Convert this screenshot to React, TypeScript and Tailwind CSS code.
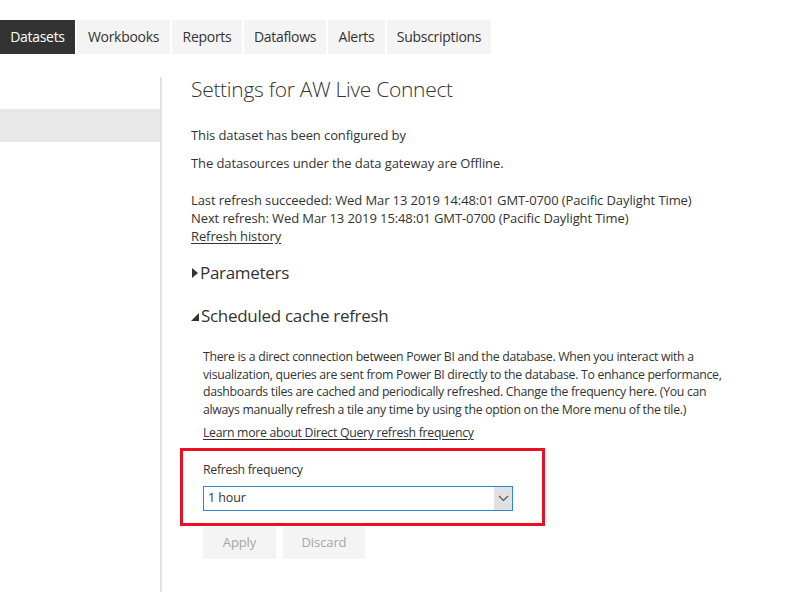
const tabs = [
  { label: 'Datasets', w: 'w-[75px]' },
  { label: 'Workbooks', w: 'w-[93px]' },
  { label: 'Reports', w: 'w-[70px]' },
  { label: 'Dataflows', w: 'w-[82px]' },
  { label: 'Alerts', w: 'w-[57px]' },
  { label: 'Subscriptions', w: 'w-[104px]' },
];

export default function App() {
  return (
    <div className="h-[605px] w-[793px] overflow-hidden bg-white font-['Open_Sans',sans-serif] text-[#333]">
      {/* Tabs */}
      <div className="mt-[20px] flex h-[34px] gap-[2px]">
        {tabs.map((t, i) => (
          <div
            key={t.label}
            className={
              (i === 0 ? 'bg-[#333] text-white ' : 'bg-[#f4f4f4] text-[#333] ') +
              t.w +
              ' flex items-center justify-center pb-[1px] text-[14px] tracking-[-0.3px]'
            }
          >
            {t.label}
          </div>
        ))}
      </div>

      <div className="mt-[23px] flex">
        {/* Sidebar */}
        <div className="h-[515px] w-[162px] border-r-2 border-[#e1e1e1] pt-[32px]">
          <div className="h-[33px] bg-[#e8e8e8]" />
        </div>

        {/* Main */}
        <div className="pl-[29px] text-[13px] tracking-[-0.1px]">
          <h1 className="mt-[-3px] text-[21px] font-light leading-[30px] tracking-[-0.3px] text-[#333]">
            Settings for AW Live Connect
          </h1>
          <p className="mt-[22px] leading-[18px]">This dataset has been configured by</p>
          <p className="mt-[10px] leading-[18px]">The datasources under the data gateway are Offline.</p>
          <div className="mt-[19px] leading-[18px]">
            <p>Last refresh succeeded: Wed Mar 13 2019 14:48:01 GMT-0700 (Pacific Daylight Time)</p>
            <p>Next refresh: Wed Mar 13 2019 15:48:01 GMT-0700 (Pacific Daylight Time)</p>
            <p className="underline underline-offset-2">Refresh history</p>
          </div>

          <div className="mt-[16px] flex items-center text-[17px] leading-[24px] tracking-[-0.3px]">
            <svg width="8" height="12" viewBox="0 0 8 12" className="mr-[1px]">
              <path d="M1 1 L7 6 L1 11 Z" fill="#333" />
            </svg>
            Parameters
          </div>
          <div className="mt-[19px] flex items-center text-[17px] leading-[24px] tracking-[-0.3px]">
            <svg width="9" height="9" viewBox="0 0 9 9" className="mr-[1px] mt-[3px]">
              <path d="M8 0 L8 8 L0 8 Z" fill="#333" />
            </svg>
            Scheduled cache refresh
          </div>

          <div className="pl-[12px] text-[12.3px] tracking-[-0.3px]">
            <p className="mt-[20px] w-[530px] leading-[17.5px]">
              There is a direct connection between Power BI and the database. When you interact with a
              visualization, queries are sent from Power BI directly to the database. To enhance performance,
              dashboards tiles are cached and periodically refreshed. Change the frequency here. (You can
              always manually refresh a tile any time by using the option on the More menu of the tile.)
            </p>
            <p className="mt-[6px] leading-[18px] underline underline-offset-2">
              Learn more about Direct Query refresh frequency
            </p>
          </div>

          {/* Highlighted frequency box */}
          <div className="ml-[-11px] mt-[6px] h-[78px] w-[365px] border-[3px] border-[#e81123] pl-[20px] pt-[10px]">
            <div className="text-[12.3px] leading-[18px] tracking-[-0.3px]">Refresh frequency</div>
            <div className="mt-[7px] flex h-[25px] w-[310px] items-center border border-[#2b88d8] bg-white">
              <span className="flex-1 pl-[4px] text-[12.5px]">1 hour</span>
              <div className="flex h-full w-[18px] items-center justify-center bg-[#e0e0e0]">
                <svg width="11" height="7" viewBox="0 0 11 7">
                  <path d="M1 1 L5.5 5.5 L10 1" fill="none" stroke="#555" strokeWidth="1.2" />
                </svg>
              </div>
            </div>
          </div>

          <div className="ml-[12px] mt-[1px] flex gap-[7px]">
            <button className="h-[32px] w-[73px] bg-[#f4f4f4] text-[13px] text-[#a6a6a6]">Apply</button>
            <button className="h-[32px] w-[82px] bg-[#f4f4f4] text-[13px] text-[#a6a6a6]">Discard</button>
          </div>
        </div>
      </div>
    </div>
  );
}
